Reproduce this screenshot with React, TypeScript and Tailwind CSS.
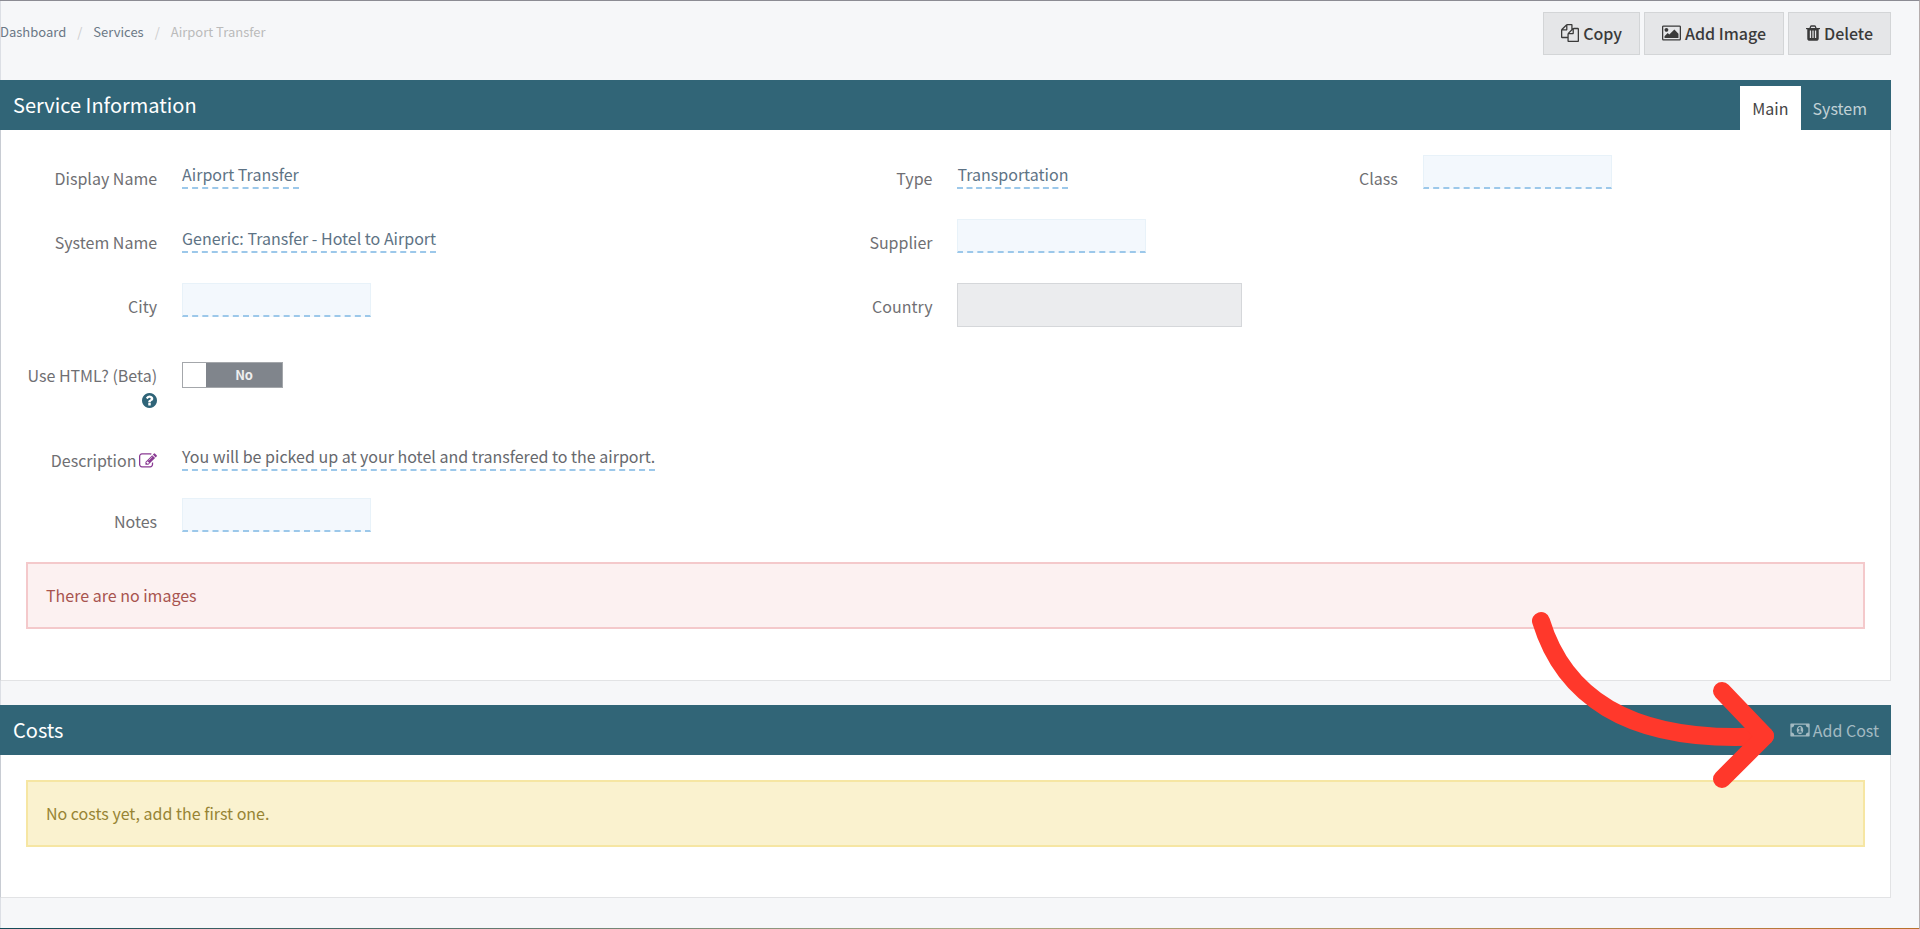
import { useState, type ReactNode } from 'react';

const iconPaths = {
  copy: 'M1696 384q40 0 68 28t28 68v1216q0 40-28 68t-68 28h-960q-40 0-68-28t-28-68v-288h-544q-40 0-68-28t-28-68v-672q0-40 20-88t48-76l408-408q28-28 76-48t88-20h416q40 0 68 28t28 68v328q68-40 128-40h416zm-544 213l-299 299h299v-299zm-640-384l-299 299h299v-299zm196 647l316-316v-416h-384v416q0 40-28 68t-68 28h-416v640h512v-256q0-40 20-88t48-76zm956 804v-1152h-384v416q0 40-28 68t-68 28h-416v640h896z',
  image:
    'M640 576q0 80-56 136t-136 56-136-56-56-136 56-136 136-56 136 56 56 136zm1024 384v448h-1408v-192l320-320 160 160 512-512zm96-704h-1600q-13 0-22.5 9.5t-9.5 22.5v1216q0 13 9.5 22.5t22.5 9.5h1600q13 0 22.5-9.5t9.5-22.5v-1216q0-13-9.5-22.5t-22.5-9.5zm160 32v1216q0 66-47 113t-113 47h-1600q-66 0-113-47t-47-113v-1216q0-66 47-113t113-47h1600q66 0 113 47t47 113z',
  trash:
    'M704 1376v-704q0-14-9-23t-23-9h-64q-14 0-23 9t-9 23v704q0 14 9 23t23 9h64q14 0 23-9t9-23zm256 0v-704q0-14-9-23t-23-9h-64q-14 0-23 9t-9 23v704q0 14 9 23t23 9h64q14 0 23-9t9-23zm256 0v-704q0-14-9-23t-23-9h-64q-14 0-23 9t-9 23v704q0 14 9 23t23 9h64q14 0 23-9t9-23zm-544-992h448l-48-117q-7-9-17-11h-317q-10 2-17 11zm928 32v64q0 14-9 23t-23 9h-96v948q0 83-47 143.5t-113 60.5h-832q-66 0-113-58.5t-47-141.5v-952h-96q-14 0-23-9t-9-23v-64q0-14 9-23t23-9h309l70-167q15-37 54-63t79-26h320q40 0 79 26t54 63l70 167h309q14 0 23 9t9 23z',
  edit: 'M888 1184l116-116-152-152-116 116v56h96v96h56zm440-720q-16-16-33 1l-350 350q-17 17-1 33t33-1l350-350q17-17 1-33zm80 594v190q0 119-84.5 203.5t-203.5 84.5h-832q-119 0-203.5-84.5t-84.5-203.5v-832q0-119 84.5-203.5t203.5-84.5h832q63 0 117 25 15 7 18 23 3 17-9 29l-49 49q-14 14-32 8-23-6-45-6h-832q-66 0-113 47t-47 113v832q0 66 47 113t113 47h832q66 0 113-47t47-113v-126q0-13 9-22l64-64q15-15 35-7t20 29zm-96-738l288 288-672 672h-288v-288zm444 132l-92 92-288-288 92-92q28-28 68-28t68 28l152 152q28 28 28 68t-28 68z',
  help: 'M1024 1376v-192q0-14-9-23t-23-9h-192q-14 0-23 9t-9 23v192q0 14 9 23t23 9h192q14 0 23-9t9-23zm256-672q0-88-55.5-163t-138.5-116-170-41q-243 0-371 213-15 24 8 42l132 100q7 6 19 6 16 0 25-12 53-68 86-92 34-24 86-24 48 0 85.5 26t37.5 59q0 38-20 61t-68 45q-63 28-115.5 86.5t-52.5 125.5v36q0 14 9 23t23 9h192q14 0 23-9t9-23q0-19 21.5-49.5t54.5-49.5q32-18 49-28.5t46-35 44.5-48 28-60.5 12.5-81zm384 192q0 209-103 385.5t-279.5 279.5-385.5 103-385.5-103-279.5-279.5-103-385.5 103-385.5 279.5-279.5 385.5-103 385.5 103 279.5 279.5 103 385.5z',
  money:
    'M768 1152h384v-96h-128v-448h-114l-148 137 77 80q42-37 55-57h2v288h-128v96zm512-256q0 70-21 142t-59.5 134-101.5 101-138 39-138-39-101.5-101-59.5-134-21-142 21-142 59.5-134 101.5-101 138-39 138 39 101.5 101 59.5 134 21 142zm512 256v-512q-106 0-181-75t-75-181h-1152q0 106-75 181t-181 75v512q106 0 181 75t75 181h1152q0-106 75-181t181-75zm128-832v1152q0 26-19 45t-45 19h-1792q-26 0-45-19t-19-45v-1152q0-26 19-45t45-19h1792q26 0 45 19t19 45z',
};

interface IconProps {
  name: keyof typeof iconPaths;
  viewBox: string;
  className: string;
}

const Icon = ({ name, viewBox, className }: IconProps) => (
  <svg viewBox={viewBox} className={className} fill="currentColor" aria-hidden="true">
    <path d={iconPaths[name]} />
  </svg>
);

const ToolbarButton = ({ children }: { children: ReactNode }) => (
  <button
    type="button"
    className="flex h-[43px] items-center gap-1 border border-[#d3d5d7] bg-[#e5e6e8] px-[17px] pb-[2px] text-base font-medium text-[#3a3a3a]"
  >
    {children}
  </button>
);

const Label = ({ htmlFor, children }: { htmlFor: string; children: ReactNode }) => (
  <label htmlFor={htmlFor} className="col-span-1 pt-[11px] pr-[13px] text-right text-[#6f6f73]">
    {children}
  </label>
);

const EditableText = ({ id, children }: { id: string; children: ReactNode }) => (
  <a
    id={id}
    href="#edit"
    className="mt-[7px] inline-block border-b-2 border-dashed border-[#9cc8ea] pb-px whitespace-nowrap text-[#5e7385]"
  >
    {children}
  </a>
);

const EmptyField = ({ id }: { id: string }) => (
  <input
    id={id}
    type="text"
    className="block h-[34px] w-[189px] border border-b-2 border-[#e8f2f9] border-b-[#9cc8ea] bg-[#f3f8fd] px-2 [border-bottom-style:dashed]"
  />
);

export default function App() {
  const [useHtml, setUseHtml] = useState(false);

  return (
    <div className="min-h-screen border-t border-r border-t-[#8c8c94] border-r-[#b5adad] bg-[#f6f7f9] font-['Noto_Sans_CJK_SC','Source_Sans_Pro',sans-serif] text-base leading-6 shadow-[inset_1px_0_0_#dcdfe5]">
      <div className="flex min-h-[928px] flex-col">
        {/* Breadcrumb and page actions */}
        <header className="flex items-start justify-between pt-[11px] pr-7 pb-[25px]">
          <nav aria-label="Breadcrumb" className="pt-2 text-[13px] leading-6">
            <ol className="flex">
              <li>
                <a href="#dashboard" className="text-[#6b7886]">Dashboard</a>
                <span className="px-[11px] text-[#cccccc]">/</span>
              </li>
              <li>
                <a href="#services" className="text-[#6b7886]">Services</a>
                <span className="px-[11px] text-[#cccccc]">/</span>
              </li>
              <li className="text-[#bbbbbb]">Airport Transfer</li>
            </ol>
          </nav>
          <div className="flex gap-1">
            <ToolbarButton>
              <Icon name="copy" viewBox="0 0 1792 1792" className="size-[18px]" />
              Copy
            </ToolbarButton>
            <ToolbarButton>
              <Icon name="image" viewBox="0 0 1920 1792" className="h-[18px] w-[19px]" />
              Add Image
            </ToolbarButton>
            <ToolbarButton>
              <Icon name="trash" viewBox="192 0 1408 1792" className="h-[18px] w-[14px]" />
              Delete
            </ToolbarButton>
          </div>
        </header>

        {/* Service information */}
        <section className="mr-7 bg-white">
          <div className="flex h-[50px] justify-between bg-[#316577] pl-[13px]">
            <h2 className="pt-[13px] text-xl leading-6 text-white">Service Information</h2>
            <div role="tablist" className="flex pt-[6px] pr-3">
              <button type="button" role="tab" aria-selected="true" className="bg-white px-3 text-[#444444]">
                Main
              </button>
              <button type="button" role="tab" aria-selected="false" className="px-3 text-[#c1d1d6]">
                System
              </button>
            </div>
          </div>

          <form className="border-r border-b border-l border-[#e2e3e5] border-l-[#c8ccd3] px-[14px] pt-[25px] pb-[51px]">
            <div className="grid h-16 grid-cols-12">
              <Label htmlFor="display-name">Display Name</Label>
              <div className="col-span-4 pl-3">
                <EditableText id="display-name">Airport Transfer</EditableText>
              </div>
              <Label htmlFor="type">Type</Label>
              <div className="col-span-2 pl-3">
                <EditableText id="type">Transportation</EditableText>
              </div>
              <Label htmlFor="class">Class</Label>
              <div className="col-span-3 pl-3">
                <EmptyField id="class" />
              </div>
            </div>

            <div className="grid h-16 grid-cols-12">
              <Label htmlFor="system-name">System Name</Label>
              <div className="col-span-4 pl-3">
                <EditableText id="system-name">Generic: Transfer - Hotel to Airport</EditableText>
              </div>
              <Label htmlFor="supplier">Supplier</Label>
              <div className="col-span-2 pl-3">
                <EmptyField id="supplier" />
              </div>
            </div>

            <div className="grid h-[69px] grid-cols-12">
              <Label htmlFor="city">City</Label>
              <div className="col-span-4 pl-3">
                <EmptyField id="city" />
              </div>
              <Label htmlFor="country">Country</Label>
              <div className="col-span-2 pr-[14px] pl-3">
                <input
                  id="country"
                  type="text"
                  disabled
                  className="block h-11 w-full border border-[#d5d7da] bg-[#ebecee] px-3"
                />
              </div>
            </div>

            <div className="grid h-[85px] grid-cols-12">
              <Label htmlFor="use-html">
                <span className="whitespace-nowrap">Use HTML? (Beta)</span>
                <Icon name="help" viewBox="128 128 1536 1536" className="mt-[6px] ml-auto size-[15px] text-[#2f6478]" />
              </Label>
              <div className="col-span-4 pt-[10px] pl-3">
                <button
                  id="use-html"
                  type="button"
                  role="switch"
                  aria-checked={useHtml}
                  onClick={() => setUseHtml(!useHtml)}
                  className="flex h-[26px] w-[101px] border border-[#a4a7ab] bg-[#80858c] text-[13px] leading-6 font-bold text-[#eeeeee]"
                >
                  <span className="h-full w-[23px] bg-white" />
                  <span className="flex-1">{useHtml ? 'Yes' : 'No'}</span>
                </button>
              </div>
            </div>

            <div className="grid h-[61px] grid-cols-12">
              <Label htmlFor="description">
                Description{' '}
                <Icon name="edit" viewBox="0 0 1792 1792" className="-ml-px inline size-[18px] align-[-3px] text-[#8a3a93]" />
              </Label>
              <div className="col-span-11 pl-3">
                <EditableText id="description">
                  <span className="text-[#66686d]">
                    You will be picked up at your hotel and transfered to the airport.
                  </span>
                </EditableText>
              </div>
            </div>

            <div className="grid h-16 grid-cols-12">
              <Label htmlFor="notes">Notes</Label>
              <div className="col-span-11 pl-3">
                <EmptyField id="notes" />
              </div>
            </div>

            <div className="mx-[11px] border-2 border-[#f4c9cb] bg-[#fcf1f1] px-[18px] pt-[19px] pb-5 text-[#a8544f]">
              There are no images
            </div>
          </form>
        </section>

        {/* Costs */}
        <section className="relative mt-6 mr-7 bg-white">
          <div className="flex h-[50px] items-center justify-between bg-[#316577] pr-3 pl-[13px]">
            <h2 className="text-xl leading-6 text-white">Costs</h2>
            <button type="button" className="flex items-center gap-[3px] text-[#a3bac2]">
              <Icon name="money" viewBox="0 0 1920 1792" className="h-[18px] w-5" />
              Add Cost
            </button>
          </div>
          <div className="border-r border-b border-l border-[#e2e3e5] border-l-[#c8ccd3] px-[25px] pt-[25px] pb-[50px]">
            <div className="border-2 border-[#f6e6a3] bg-[#faf2cf] px-[18px] pt-[19px] pb-5 text-[#978434]">
              No costs yet, add the first one.
            </div>
          </div>

          {/* Pointer to the Add Cost action */}
          <svg
            viewBox="1530 610 245 180"
            className="pointer-events-none absolute -top-[95px] right-[115px] h-[180px] w-[245px]"
            fill="none"
            stroke="#ff382b"
            strokeWidth="18"
            strokeLinecap="round"
            strokeLinejoin="round"
            aria-hidden="true"
          >
            <path d="M1540 621C1561 690 1620 745 1764 736" />
            <path d="M1721 691L1764 736L1721 779" />
          </svg>
        </section>

        <div className="mt-auto h-px bg-linear-to-r from-[#124a58] via-[#a9a986] to-[#b8702a]" />
      </div>
    </div>
  );
}
